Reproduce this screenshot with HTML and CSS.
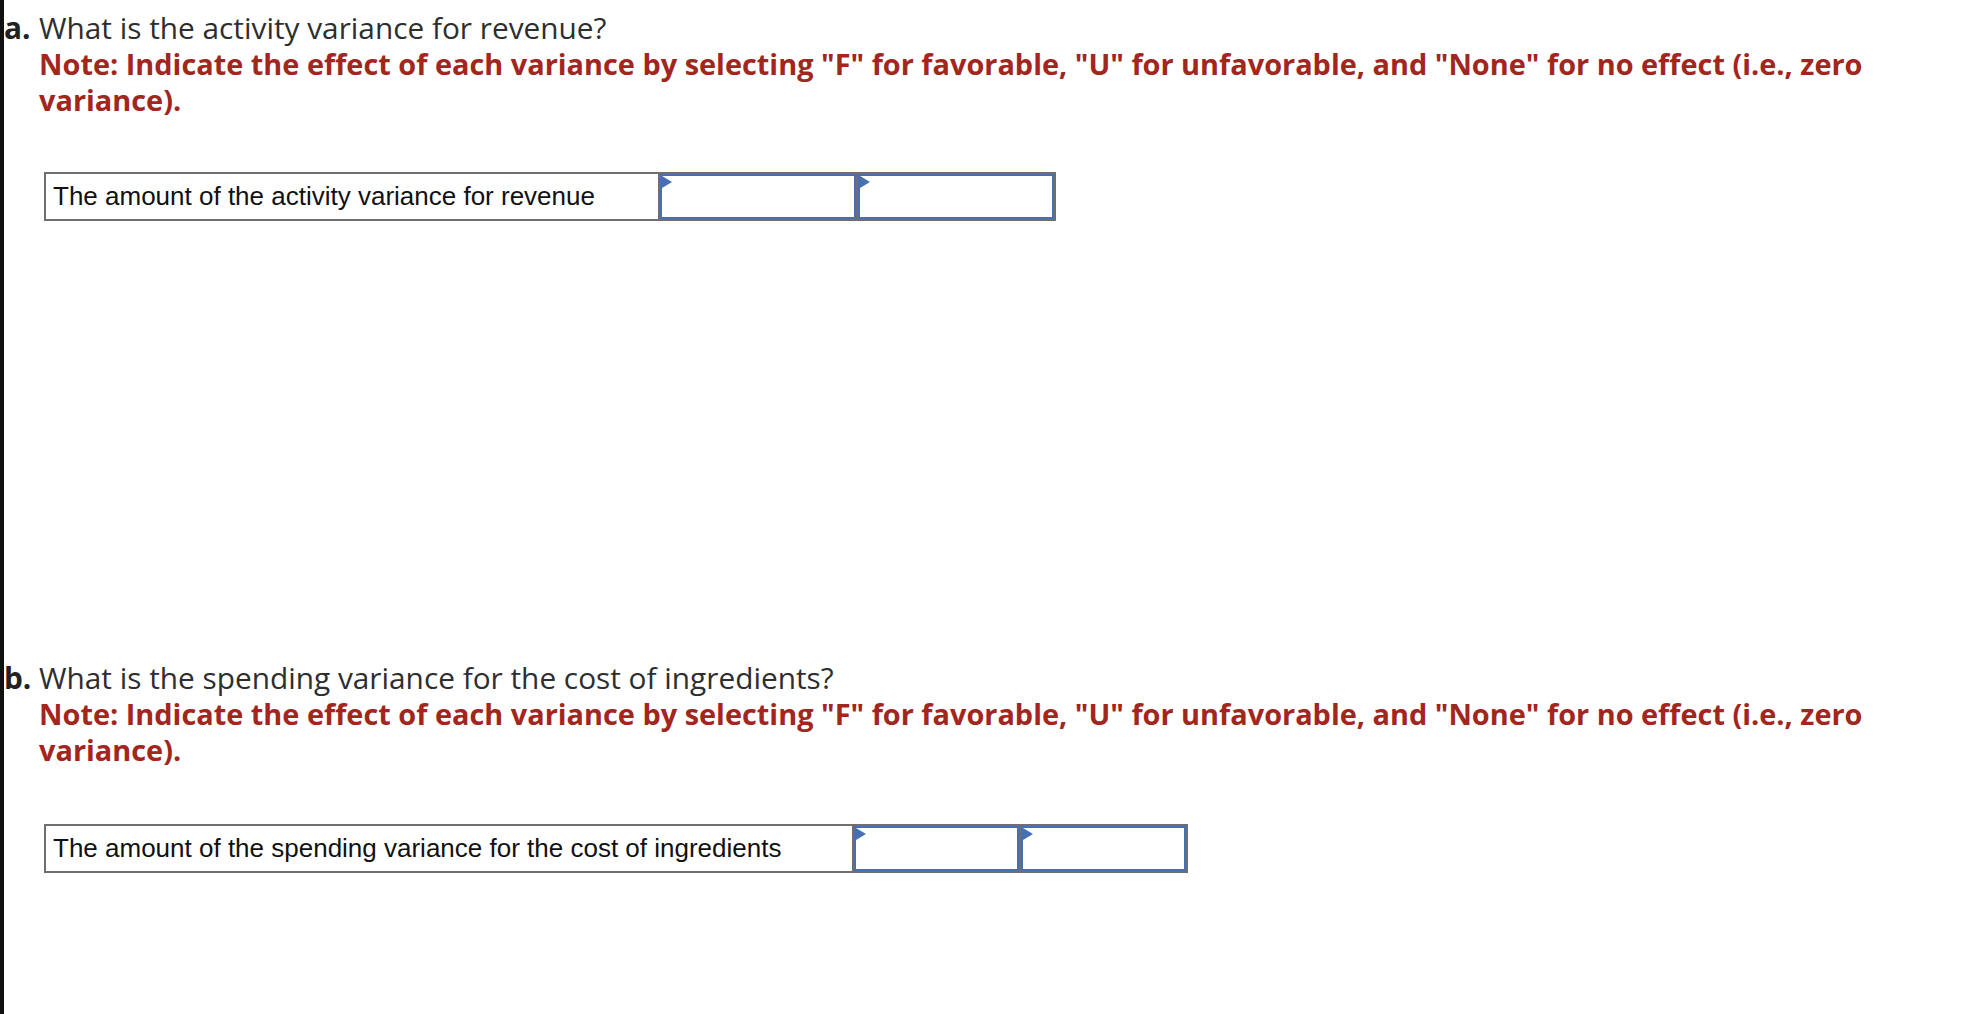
FILE: index.html
```html
<!DOCTYPE html>
<html lang="en">
<head>
<meta charset="utf-8">
<title>Variance questions</title>
<link rel="stylesheet" href="styles.css">
</head>
<body>
<div class="page">
  <section class="part part-a">
    <div class="question"><span class="qlabel">a.</span><span class="qtext">What is the activity variance for revenue?</span></div>
    <div class="note">Note: Indicate the effect of each variance by selecting "F" for favorable, "U" for unfavorable, and "None" for no effect (i.e., zero variance).</div>
    <div class="answer-table table-a">
      <div class="cell label-cell">The amount of the activity variance for revenue</div>
      <div class="cell input-cell"><div class="input"><span class="marker"></span></div></div>
      <div class="cell input-cell"><div class="input"><span class="marker"></span></div></div>
    </div>
  </section>
  <section class="part part-b">
    <div class="question"><span class="qlabel">b.</span><span class="qtext">What is the spending variance for the cost of ingredients?</span></div>
    <div class="note">Note: Indicate the effect of each variance by selecting "F" for favorable, "U" for unfavorable, and "None" for no effect (i.e., zero variance).</div>
    <div class="answer-table table-b">
      <div class="cell label-cell">The amount of the spending variance for the cost of ingredients</div>
      <div class="cell input-cell"><div class="input"><span class="marker"></span></div></div>
      <div class="cell input-cell"><div class="input"><span class="marker"></span></div></div>
    </div>
  </section>
</div>
</body>
</html>
```
FILE: styles.css
```css
html, body {
  margin: 0;
  padding: 0;
  background: #ffffff;
}
body {
  font-family: "Open Sans", Lato, "Liberation Sans", sans-serif;
}
.page {
  border-left: 4px solid #111111;
  min-height: 1014px;
  box-sizing: border-box;
}
.part {
  display: flex;
  flex-direction: column;
  align-items: flex-start;
}
.part-a {
  padding-top: 10px;
}
.part-b {
  padding-top: 439px;
}
.question {
  display: flex;
  font-size: 29.8px;
  line-height: 36px;
  color: #2e2e2e;
}
.qlabel {
  font-weight: 700;
  width: 35px;
  color: #222222;
}
.note {
  padding-left: 35px;
  padding-right: 60px;
  font-size: 28.9px;
  line-height: 35.5px;
  font-weight: 700;
  color: #a3261e;
}
.answer-table {
  display: flex;
  margin-left: 40px;
  border: 2px solid #6f6f6f;
  height: 45px;
}
.table-a {
  margin-top: 55px;
}
.table-b {
  margin-top: 57px;
}
.cell {
  display: flex;
  align-items: center;
}
.cell + .cell {
  border-left: 2px solid #6f6f6f;
}
.label-cell {
  font-family: "Liberation Sans", Arial, sans-serif;
  font-size: 26px;
  color: #111111;
  padding-left: 7px;
  box-sizing: border-box;
}
.table-a .label-cell { width: 612px; }
.table-b .label-cell { width: 806px; }
.table-a .input-cell { width: 196px; }
.table-b .input-cell { width: 165px; }
.input {
  position: relative;
  width: 100%;
  height: 100%;
  box-sizing: border-box;
  border: 2px solid #4570b5;
}
.marker {
  position: absolute;
  left: 0;
  top: 0;
  width: 0;
  height: 0;
  border-top: 6px solid transparent;
  border-bottom: 6px solid transparent;
  border-left: 10px solid #4570b5;
}
```
